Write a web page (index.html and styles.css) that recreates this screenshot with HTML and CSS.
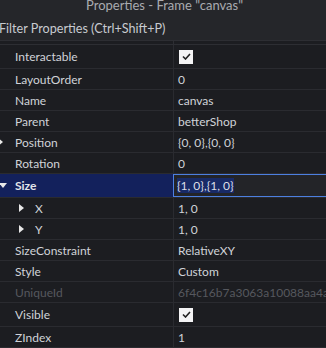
FILE: index.html
```html
<!DOCTYPE html>
<html>
  <head>
    <meta charset="UTF-8">
    <title>Properties</title>
    <link rel="stylesheet" href="styles.css">
  </head>
  <body>
    <div class="titlebar"><span>Properties - Frame "canvas"</span></div>
    <div class="filter">Filter Properties (Ctrl+Shift+P)</div>
    <div class="header"><div></div><div class="val"></div></div>

    <div class="props">
      <div class="row tall">
        <div class="name">Interactable</div>
        <div class="val"><span class="check"><svg width="9" height="7" viewBox="0 0 9 7"><path d="M1 3.5 L3.5 6 L8 1" fill="none" stroke="#222" stroke-width="1.6"/></svg></span></div>
      </div>
      <div class="row"><div class="name">LayoutOrder</div><div class="val">0</div></div>
      <div class="row"><div class="name">Name</div><div class="val">canvas</div></div>
      <div class="row"><div class="name">Parent</div><div class="val">betterShop</div></div>
      <div class="row"><div class="name"><span class="arrow right outer"></span>Position</div><div class="val">{0, 0},{0, 0}</div></div>
      <div class="row"><div class="name">Rotation</div><div class="val">0</div></div>
      <div class="row tall selected">
        <div class="name"><span class="arrow down outer"></span>Size</div>
        <div class="val edit"><span class="sel">{1, 0},{1, 0}</span></div>
      </div>
      <div class="row"><div class="name child"><span class="arrow right"></span>X</div><div class="val">1, 0</div></div>
      <div class="row"><div class="name child"><span class="arrow right"></span>Y</div><div class="val">1, 0</div></div>
      <div class="row"><div class="name">SizeConstraint</div><div class="val">RelativeXY</div></div>
      <div class="row"><div class="name">Style</div><div class="val">Custom</div></div>
      <div class="row disabled"><div class="name">UniqueId</div><div class="val">6f4c16b7a3063a10088aa4aa0000</div></div>
      <div class="row tall">
        <div class="name">Visible</div>
        <div class="val"><span class="check"><svg width="9" height="7" viewBox="0 0 9 7"><path d="M1 3.5 L3.5 6 L8 1" fill="none" stroke="#222" stroke-width="1.6"/></svg></span></div>
      </div>
      <div class="row"><div class="name">ZIndex</div><div class="val">1</div></div>
    </div>
  </body>
</html>
```

FILE: styles.css
```css
body {
  margin: 0;
  background: #1c1d21;
  color: #d0d3d8;
  font-family: Lato, sans-serif;
  font-size: 12px;
  overflow: hidden;
  width: 326px;
  height: 348px;
}
.titlebar {
  height: 15px;
  background: #25262a;
  color: #a9abb0;
  font-size: 13px;
  text-align: center;
  overflow: hidden;
}
.titlebar span {
  display: block;
  margin-top: -3px;
  padding-left: 3px;
}
.filter {
  height: 25px;
  line-height: 28px;
  background: #25262a;
  color: #c8cbd0;
  font-size: 12.6px;
  margin-left: -1px;
  white-space: nowrap;
}
.header {
  display: grid;
  grid-template-columns: 173px 1fr;
  height: 3px;
  border-top: 1px solid #2d2e33;
  border-bottom: 1px solid #2d2e33;
}
.header .val {
  border-left: 1px solid #2d2e33;
}
.row {
  display: grid;
  grid-template-columns: 173px 1fr;
  height: 20px;
  border-bottom: 1px solid #2a2b30;
  white-space: nowrap;
}
.row.tall {
  height: 23px;
}
.name {
  position: relative;
  padding-left: 15px;
  display: flex;
  align-items: center;
}
.name.child {
  padding-left: 35px;
}
.val {
  border-left: 1px solid #2a2b30;
  padding-left: 4px;
  display: flex;
  align-items: center;
  overflow: hidden;
}
.check {
  width: 14px;
  height: 14px;
  background: #f4f4f5;
  display: flex;
  align-items: center;
  justify-content: center;
  margin-left: 1px;
}
.arrow {
  position: absolute;
  width: 0;
  height: 0;
}
.arrow.right {
  left: 19px;
  top: 6px;
  border-top: 4px solid transparent;
  border-bottom: 4px solid transparent;
  border-left: 5px solid #e8e8e8;
}
.arrow.right.outer {
  left: -2px;
}
.arrow.down {
  left: -1px;
  top: 9px;
  border-left: 4px solid transparent;
  border-right: 4px solid transparent;
  border-top: 5px solid #e8e8e8;
}
.selected {
  background: #13215c;
}
.selected .name {
  font-weight: bold;
  color: #e2e5ea;
}
.edit {
  background: #232428;
  border: 1px solid #4c7fe0;
  border-right: none;
  padding-left: 3px;
}
.sel {
  background: #182a66;
  color: #dcdfe6;
}
.disabled .name,
.disabled .val {
  color: #56585e;
}
```
